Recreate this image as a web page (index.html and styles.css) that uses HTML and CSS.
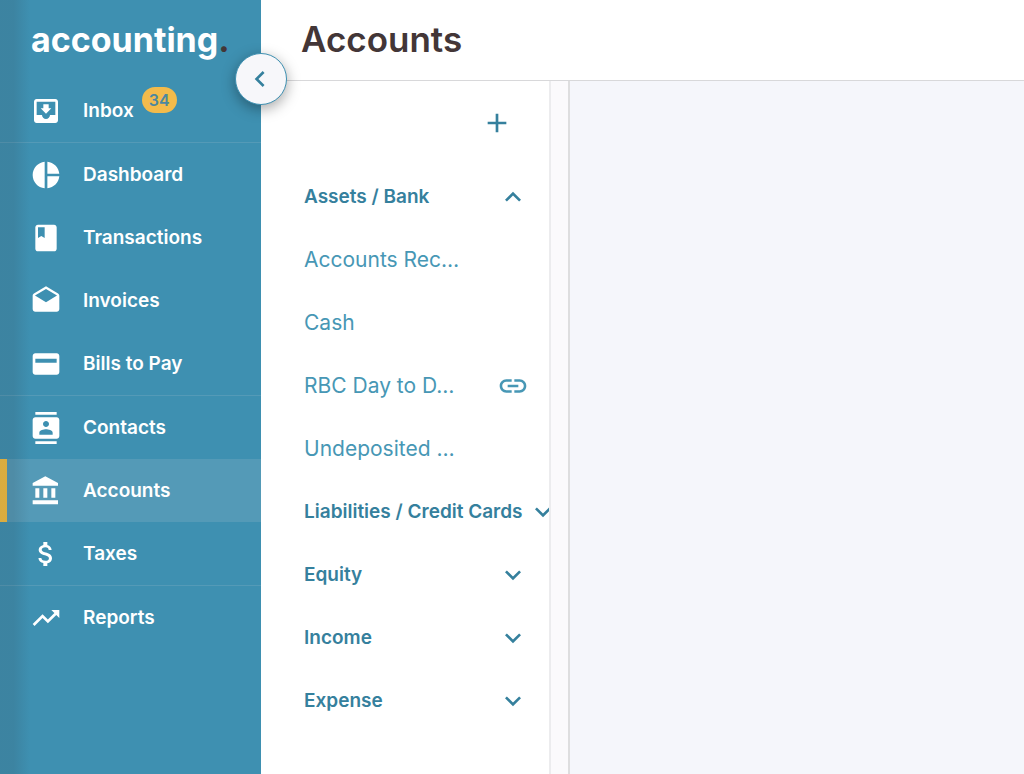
FILE: index.html
```html
<!DOCTYPE html>
<html lang="en">

<head>
    <meta charset="UTF-8">
    <meta name="viewport" content="width=device-width, initial-scale=1.0">
    <title>Accounts</title>
    <link rel="stylesheet" href="styles.css">
</head>

<body>
    <div class="app">
        <aside class="sidebar">
            <a href="#" class="brand">accounting<span class="brand-dot">.</span></a>
            <button class="toggle" aria-label="Collapse menu">
                <svg class="icon" viewBox="0 0 24 24"><path d="M15.41 7.41L14 6l-6 6 6 6 1.41-1.41L10.83 12z"/></svg>
            </button>
            <nav>
                <div class="nav-group">
                    <a href="#" class="nav-item">
                        <svg class="icon" viewBox="0 0 24 24"><path d="M19 3H4.99c-1.11 0-1.98.9-1.98 2L3 19c0 1.1.88 2 1.99 2H19c1.1 0 2-.9 2-2V5c0-1.1-.9-2-2-2zm0 12h-4c0 1.66-1.35 3-3 3s-3-1.34-3-3H4.99V5H19v10zm-3-5h-2V7h-4v3H8l4 4 4-4z"/></svg>
                        <span>Inbox</span>
                        <span class="badge">34</span>
                    </a>
                </div>
                <div class="nav-group">
                    <a href="#" class="nav-item">
                        <svg class="icon" viewBox="0 0 24 24"><path d="M11 2v20c-5.07-.5-9-4.79-9-10s3.93-9.5 9-10zm2.03 0v8.99H22c-.47-4.74-4.24-8.52-8.97-8.99zm0 11.01V22c4.74-.47 8.5-4.25 8.97-8.99h-8.97z"/></svg>
                        <span>Dashboard</span>
                    </a>
                    <a href="#" class="nav-item">
                        <svg class="icon" viewBox="0 0 24 24"><path d="M18 2H6c-1.1 0-2 .9-2 2v16c0 1.1.9 2 2 2h12c1.1 0 2-.9 2-2V4c0-1.1-.9-2-2-2zM6 4h5v8l-2.5-1.5L6 12V4z"/></svg>
                        <span>Transactions</span>
                    </a>
                    <a href="#" class="nav-item">
                        <svg class="icon" viewBox="0 0 24 24"><path d="M21.99 8c0-.72-.37-1.35-.94-1.7L12 1 2.95 6.3C2.38 6.65 2 7.28 2 8v10c0 1.1.9 2 2 2h16c1.1 0 2-.9 2-2l-.01-10zM12 13L3.74 7.84 12 3l8.26 4.84L12 13z"/></svg>
                        <span>Invoices</span>
                    </a>
                    <a href="#" class="nav-item">
                        <svg class="icon" viewBox="0 0 24 24"><path d="M20 4H4c-1.11 0-1.99.89-1.99 2L2 18c0 1.11.89 2 2 2h16c1.11 0 2-.89 2-2V6c0-1.11-.89-2-2-2zm0 7H4V8h16v3z"/></svg>
                        <span>Bills to Pay</span>
                    </a>
                </div>
                <div class="nav-group">
                    <a href="#" class="nav-item">
                        <svg class="icon" viewBox="0 0 24 24"><path d="M20 0H4v2h16V0zM4 24h16v-2H4v2zM20 4H4c-1.1 0-2 .9-2 2v12c0 1.1.9 2 2 2h16c1.1 0 2-.9 2-2V6c0-1.1-.9-2-2-2zm-8 2.75c1.24 0 2.25 1.01 2.25 2.25s-1.01 2.25-2.25 2.25S9.75 10.24 9.75 9 10.76 6.75 12 6.75zM17 17H7v-1.5c0-1.67 3.33-2.5 5-2.5s5 .83 5 2.5V17z"/></svg>
                        <span>Contacts</span>
                    </a>
                    <a href="#" class="nav-item active">
                        <svg class="icon" viewBox="0 0 24 24"><path d="M4 10v7h3v-7H4zm6 0v7h3v-7h-3zM2 22h19v-3H2v3zm14-12v7h3v-7h-3zm-4.5-9L2 6v2h19V6l-9.5-5z"/></svg>
                        <span>Accounts</span>
                    </a>
                    <a href="#" class="nav-item">
                        <svg class="icon" viewBox="0 0 24 24"><path d="M11.8 10.9c-2.27-.59-3-1.2-3-2.15 0-1.09 1.01-1.85 2.7-1.85 1.78 0 2.44.85 2.5 2.1h2.21c-.07-1.72-1.12-3.3-3.21-3.81V3h-3v2.16c-1.94.42-3.5 1.68-3.5 3.61 0 2.31 1.91 3.46 4.7 4.13 2.5.6 3 1.48 3 2.41 0 .69-.49 1.79-2.7 1.79-2.06 0-2.87-.92-2.98-2.1h-2.2c.12 2.19 1.76 3.42 3.68 3.83V21h3v-2.15c1.95-.37 3.5-1.5 3.5-3.55 0-2.84-2.43-3.81-4.7-4.4z"/></svg>
                        <span>Taxes</span>
                    </a>
                </div>
                <div class="nav-group">
                    <a href="#" class="nav-item">
                        <svg class="icon" viewBox="0 0 24 24"><path d="M16 6l2.29 2.29-4.88 4.88-4-4L2 16.59 3.41 18l6-6 4 4 6.3-6.29L22 12V6z"/></svg>
                        <span>Reports</span>
                    </a>
                </div>
            </nav>
        </aside>

        <div class="page">
            <header class="page-header">
                <h1>Accounts</h1>
            </header>
            <div class="page-body">
                <section class="accounts">
                    <div class="accounts-bar">
                        <button class="add" aria-label="Add account">
                            <svg class="icon" viewBox="0 0 24 24"><path d="M19 13h-6v6h-2v-6H5v-2h6V5h2v6h6z"/></svg>
                        </button>
                    </div>
                    <button class="category" aria-expanded="true">
                        Assets / Bank
                        <svg class="icon" viewBox="0 0 24 24"><path d="M12 8l-6 6 1.41 1.41L12 10.83l4.59 4.58L18 14z"/></svg>
                    </button>
                    <a href="#" class="account">Accounts Rec…</a>
                    <a href="#" class="account">Cash</a>
                    <a href="#" class="account">
                        RBC Day to D…
                        <svg class="icon" viewBox="0 0 24 24"><path d="M3.9 12c0-1.71 1.39-3.1 3.1-3.1h4V7H7c-2.76 0-5 2.24-5 5s2.24 5 5 5h4v-1.9H7c-1.71 0-3.1-1.39-3.1-3.1zM8 13h8v-2H8v2zm9-6h-4v1.9h4c1.71 0 3.1 1.39 3.1 3.1s-1.39 3.1-3.1 3.1h-4V17h4c2.76 0 5-2.24 5-5s-2.24-5-5-5z"/></svg>
                    </a>
                    <a href="#" class="account">Undeposited …</a>
                    <button class="category" aria-expanded="false">
                        Liabilities / Credit Cards
                        <svg class="icon" viewBox="0 0 24 24"><path d="M16.59 8.59L12 13.17 7.41 8.59 6 10l6 6 6-6z"/></svg>
                    </button>
                    <button class="category" aria-expanded="false">
                        Equity
                        <svg class="icon" viewBox="0 0 24 24"><path d="M16.59 8.59L12 13.17 7.41 8.59 6 10l6 6 6-6z"/></svg>
                    </button>
                    <button class="category" aria-expanded="false">
                        Income
                        <svg class="icon" viewBox="0 0 24 24"><path d="M16.59 8.59L12 13.17 7.41 8.59 6 10l6 6 6-6z"/></svg>
                    </button>
                    <button class="category" aria-expanded="false">
                        Expense
                        <svg class="icon" viewBox="0 0 24 24"><path d="M16.59 8.59L12 13.17 7.41 8.59 6 10l6 6 6-6z"/></svg>
                    </button>
                </section>
                <div class="scroll-track"></div>
                <main class="content"></main>
            </div>
        </div>
    </div>
</body>

</html>
```
FILE: styles.css
```css
* {
    box-sizing: border-box;
}

body {
    margin: 0;
    font-family: Inter, sans-serif;
    color: #433637;
    background-color: #fff;
}

a {
    color: inherit;
    text-decoration: none;
}

button {
    padding: 0;
    border: 0;
    background: none;
    font-family: inherit;
    color: inherit;
    cursor: pointer;
}

h1 {
    margin: 0;
    font-size: 35px;
    font-weight: 600;
    line-height: 38px;
}

.icon {
    display: block;
    flex: none;
    width: 32px;
    height: 32px;
    fill: currentColor;
}

.app {
    display: flex;
    min-height: 100vh;
}

/* Sidebar */
.sidebar {
    position: relative;
    flex: none;
    width: 261px;
    color: #fff;
    background-color: #3e90b1;
}

.sidebar::after {
    content: "";
    position: absolute;
    top: 0;
    bottom: 0;
    left: 0;
    width: 30px;
    background: linear-gradient(to right, rgba(50, 60, 70, 0.15) 45%, rgba(50, 60, 70, 0));
    pointer-events: none;
}

.brand {
    display: block;
    height: 79px;
    padding: 20px 0 0 31px;
    font-size: 34px;
    font-weight: 700;
    line-height: 40px;
}

.brand-dot {
    color: #433637;
}

.toggle {
    position: absolute;
    top: 53px;
    right: -26px;
    z-index: 1;
    display: flex;
    align-items: center;
    justify-content: center;
    width: 52px;
    height: 52px;
    padding-right: 2px;
    border: 1px solid #3e90b1;
    border-radius: 50%;
    color: #35809d;
    background-color: #f7f7fa;
    box-shadow: 0 4px 14px rgba(0, 0, 0, 0.35);
}

.nav-group + .nav-group {
    border-top: 1px solid #549ab7;
}

.nav-item {
    display: flex;
    align-items: center;
    height: 63px;
    padding-left: 30px;
    font-size: 19px;
    font-weight: 600;
}

.nav-item .icon {
    margin-right: 21px;
}

.nav-item.active {
    padding-left: 23px;
    border-left: 7px solid #f8c03f;
    background-color: #549ab7;
}

.badge {
    height: 26px;
    margin: 0 0 22px 8px;
    padding: 0 7px;
    border-radius: 13px;
    font-size: 16px;
    line-height: 26px;
    color: #4a87a0;
    background-color: #f3bb4b;
}

/* Page */
.page {
    display: flex;
    flex: 1;
    flex-direction: column;
    min-width: 0;
}

.page-header {
    padding: 20px 40px 22px;
    border-bottom: 1px solid #d8d8da;
}

.page-body {
    display: flex;
    flex: 1;
}

.accounts {
    flex: none;
    width: 288px;
    padding: 0 20px 0 43px;
    overflow: hidden;
}

.accounts-bar {
    display: flex;
    align-items: center;
    justify-content: flex-end;
    height: 84px;
    padding-right: 16px;
    color: #35809d;
}

.category,
.account {
    display: flex;
    align-items: center;
    justify-content: space-between;
    width: 100%;
    height: 63px;
    white-space: nowrap;
}

.category {
    font-size: 19px;
    font-weight: 600;
    color: #35809d;
}

.category .icon {
    margin-left: 4px;
}

.account {
    font-size: 21px;
    color: #4797b5;
}

.scroll-track {
    flex: none;
    width: 21px;
    border-left: 2px solid #ececee;
    border-right: 2px solid #dededf;
    background-color: #fbfafc;
}

.content {
    flex: 1;
    background-color: #f5f6fb;
}
```
